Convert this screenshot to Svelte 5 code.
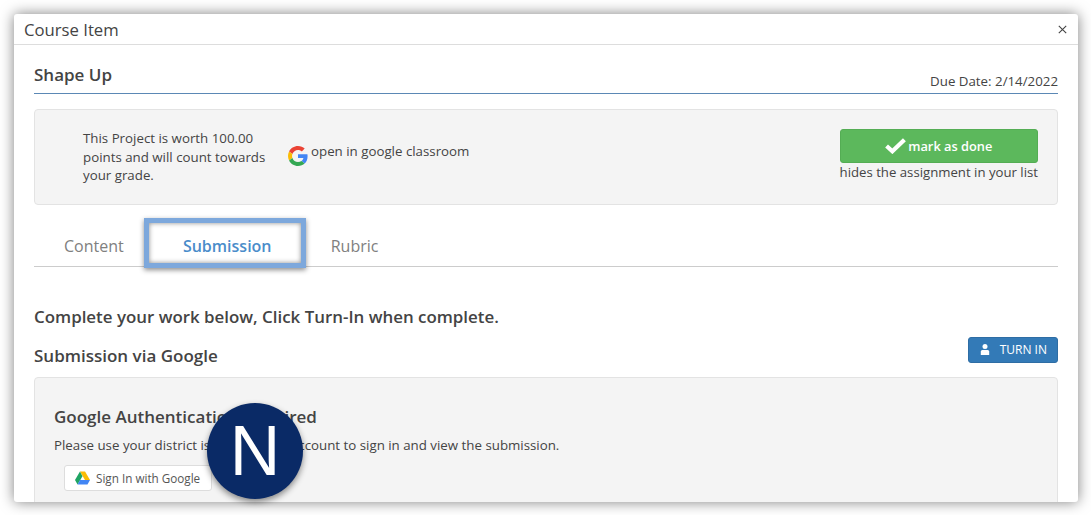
<script>
	const tabs = ['Content', 'Submission', 'Rubric'];
	let active = $state('Submission');
</script>

<div class="page">
	<div class="modal">
		<header class="modal-head">
			<h4>Course Item</h4>
			<button class="close" aria-label="Close">
				<svg viewBox="0 0 9 9" width="9" height="9"><path d="M.8.8l7.4 7.4M8.2.8L.8 8.2" stroke="#444" stroke-width="1.1" fill="none" /></svg>
			</button>
		</header>

		<div class="modal-body">
			<div class="title-row">
				<h3>Shape Up</h3>
				<span class="due">Due Date: 2/14/2022</span>
			</div>

			<div class="well info">
				<p class="worth">This Project is worth 100.00 points and will count towards your grade.</p>
				<a class="classroom" href="#top">
					<svg viewBox="0 0 48 48" width="20" height="20">
						<path fill="#ea4335" d="M24 9.5c3.5 0 6.700 1.200 9.200 3.600l6.900-6.900C35.900 2.400 30.500 0 24 0 14.600 0 6.500 5.400 2.600 13.200l8 6.200C12.500 13.700 17.800 9.500 24 9.500z" />
						<path fill="#4285f4" d="M47 24.500c0-1.600-.1-3.100-.4-4.500H24v9h12.900c-.6 3-2.200 5.500-4.700 7.200l7.700 6c4.500-4.200 7.100-10.300 7.100-17.700z" />
						<path fill="#fbbc05" d="M10.500 28.600c-.5-1.400-.8-3-.8-4.600s.3-3.200.8-4.600l-8-6.200C.9 16.500 0 20.100 0 24s.9 7.500 2.600 10.800l7.900-6.200z" />
						<path fill="#34a853" d="M24 48c6.500 0 11.900-2.100 15.900-5.800l-7.700-6c-2.200 1.400-4.900 2.300-8.200 2.300-6.200 0-11.500-4.200-13.400-9.900l-8 6.200C6.500 42.600 14.600 48 24 48z" />
					</svg>
					<span>open in google classroom</span>
				</a>
				<div class="done">
					<button class="btn-done">
						<svg viewBox="0 0 20 16" width="21" height="17"><path d="M1.500 8.500l5.500 5L18.500 2.500" stroke="#fff" stroke-width="4" fill="none" /></svg>
						mark as done
					</button>
					<span>hides the assignment in your list</span>
				</div>
			</div>

			<nav class="tabs">
				{#each tabs as tab}
					<button class="tab" class:active={tab === active} onclick={() => (active = tab)}>{tab}</button>
				{/each}
			</nav>

			<h3 class="complete">Complete your work below, Click Turn-In when complete.</h3>

			<div class="via-row">
				<h3>Submission via Google</h3>
				<button class="btn-turnin">
					<svg viewBox="0 0 10 11" width="10" height="11"><circle cx="5" cy="2.600" r="2.500" fill="#fff" /><path d="M0.800 11V7.500Q0.800 6 2.300 6H7.700Q9.200 6 9.200 7.500V11Z" fill="#fff" /></svg>
					TURN IN
				</button>
			</div>

			<div class="well auth">
				<h3>Google Authentication Required</h3>
				<p>Please use your district issued Google account to sign in and view the submission.</p>
				<button class="btn-google">
					<svg viewBox="0 0 16 14" width="15" height="14">
						<path fill="#fbbc04" d="M5.300 0h5.400l5.300 9h-5.400z" />
						<path fill="#1fa463" d="M5.300 0L0 9l2.700 5 5.300-9z" />
						<path fill="#4285f4" d="M5.400 9H16l-2.700 5H2.700z" />
					</svg>
					Sign In with Google
				</button>
			</div>
		</div>
	</div>

	<div class="avatar">N</div>
</div>

<style>
	:global(body) {
		margin: 0;
		background: #fff;
		overflow: hidden;
	}

	.page {
		position: relative;
		height: 515px;
		padding: 14px 13px 13px 14px;
		box-sizing: border-box;
		font-family: 'Open Sans', 'Noto Sans', sans-serif;
		color: #333;
		overflow: hidden;
	}

	.modal {
		height: 488px;
		background: #fff;
		border-radius: 3px;
		box-shadow: 0 0 14px rgba(0, 0, 0, 0.5);
		overflow: hidden;
	}

	.modal-head {
		display: flex;
		align-items: center;
		justify-content: space-between;
		height: 30px;
		padding: 0 11px 0 10px;
		border-bottom: 1px solid #ddd;
	}

	h4 {
		margin: 0;
		font-size: 16.7px;
		font-weight: 400;
		color: #444;
	}

	.close {
		display: flex;
		padding: 0;
		background: none;
		border: none;
	}

	.modal-body {
		padding: 0 20px;
	}

	h3 {
		margin: 0;
		font-size: 17px;
		font-weight: 600;
		color: #444;
	}

	.title-row {
		display: flex;
		align-items: flex-end;
		justify-content: space-between;
		height: 49px;
		border-bottom: 1px solid #5b88b5;
		padding-bottom: 3px;
		box-sizing: border-box;
	}

	.title-row h3 {
		padding-bottom: 4px;
	}

	.due {
		font-size: 13.3px;
		color: #444;
	}

	.well {
		background: #f4f4f4;
		border: 1px solid #e3e3e3;
		border-radius: 4px;
	}

	.info {
		display: flex;
		align-items: center;
		height: 96px;
		margin-top: 15px;
		box-sizing: border-box;
		padding: 0 19px 0 48px;
		font-size: 13.3px;
		color: #444;
	}

	.worth {
		width: 190px;
		margin: 0;
		line-height: 18.500px;
	}

	.classroom {
		display: flex;
		align-items: center;
		gap: 3px;
		margin: -2px 0 0 15px;
		color: #444;
		text-decoration: none;
	}

	.classroom span {
		margin-top: -10px;
	}

	.done {
		display: flex;
		flex-direction: column;
		gap: 0;
		margin: -5px 0 0 auto;
		font-size: 13.2px;
		text-align: center;
	}

	.btn-done {
		display: flex;
		align-items: center;
		justify-content: center;
		gap: 2px;
		height: 34px;
		background: #5cb85c;
		border: 1px solid #54ad54;
		border-radius: 3px;
		color: #fff;
		font: 600 12.8px 'Open Sans', sans-serif;
	}

	.tabs {
		display: flex;
		align-items: stretch;
		height: 47px;
		margin-top: 14px;
		padding-left: 5px;
		border-bottom: 1px solid #ccc;
		overflow: visible;
	}

	.tab {
		position: relative;
		padding: 6px 25px 0;
		background: none;
		border: none;
		font: 400 16px 'Open Sans', sans-serif;
		color: #808080;
	}

	.tab:first-child {
		padding-right: 20px;
	}

	.tab.active {
		width: 162px;
		height: 50px;
		margin-top: -1px;
		padding: 6px 0 0 5px;
		background: #fff;
		border: 5px solid #7da8dc;
		box-sizing: border-box;
		box-shadow: 0 2px 5px rgba(0, 0, 0, 0.45), inset 0 0 5px rgba(0, 0, 0, 0.45);
		font-weight: 600;
		color: #4a8cca;
	}

	.complete {
		margin-top: 38px;
		font-size: 16.9px;
	}

	.via-row {
		display: flex;
		align-items: center;
		justify-content: space-between;
		height: 26px;
		margin-top: 14px;
	}

	.btn-turnin {
		display: flex;
		align-items: center;
		gap: 10px;
		height: 26px;
		margin-top: -11px;
		padding: 0 10px 1px 11px;
		background: #337ab7;
		border: 1px solid #2e6da4;
		border-radius: 3px;
		color: #fff;
		font: 400 12px 'Open Sans', sans-serif;
	}

	.btn-turnin svg {
		margin-top: 1px;
	}

	.auth {
		margin-top: 9px;
		height: 140px;
		padding: 27px 19px;
		box-sizing: border-box;
	}

	.auth p {
		margin: 8px 0 0;
		font-size: 13.3px;
		color: #444;
	}

	.btn-google {
		display: flex;
		align-items: center;
		gap: 6px;
		height: 26px;
		margin: 11px 0 0 10px;
		padding: 0 11px 0 10px;
		background: #fff;
		border: 1px solid #ddd;
		border-radius: 3px;
		color: #555;
		font: 400 11.7px 'Open Sans', sans-serif;
	}

	.avatar {
		position: absolute;
		left: 207px;
		top: 403px;
		display: flex;
		align-items: center;
		justify-content: center;
		width: 96px;
		height: 96px;
		border-radius: 50%;
		background: #0a2a66;
		box-shadow: 0 3px 6px rgba(0, 0, 0, 0.45);
		color: #fff;
		font: 400 70px 'Liberation Sans', sans-serif;
	}
</style>
